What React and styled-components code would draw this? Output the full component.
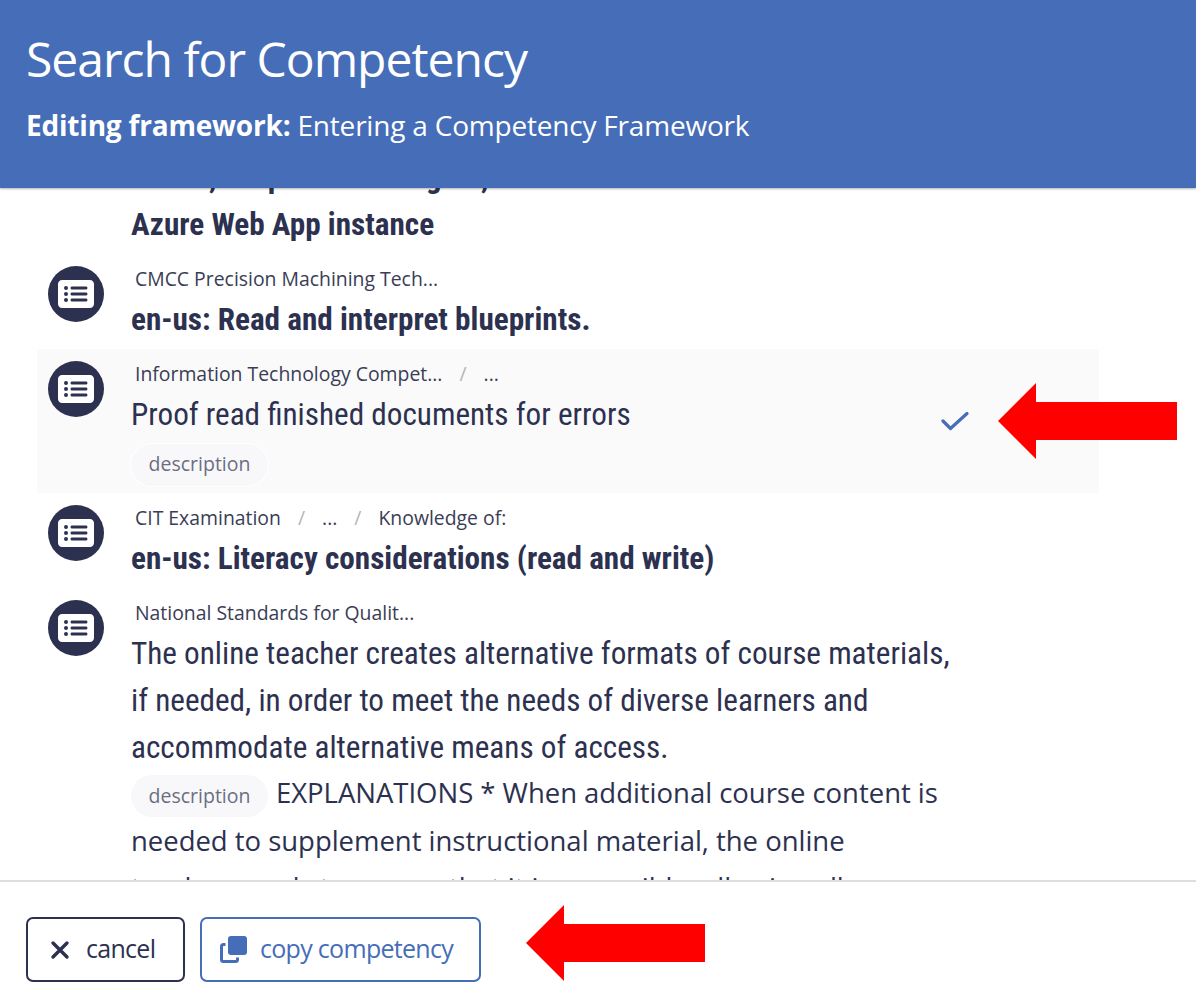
import styled, { createGlobalStyle } from "styled-components";
import { FaRectangleList } from "react-icons/fa6";

const GlobalStyle = createGlobalStyle`
	html, body {
		margin: 0;
		padding: 0;
		background: white;
	}
	body {
		font-family: "Open Sans", "Lato", sans-serif;
	}
`;

const Page = styled.div`
	position: relative;
	height: 1006px;
	display: flex;
	flex-direction: column;
	overflow: hidden;
`;

const Header = styled.header`
	height: 188px;
	flex: none;
	box-sizing: border-box;
	padding: 26px 26px 0;
	background-color: #466db8;
	color: white;
	box-shadow: 0 1px 2px rgba(0, 0, 0, 0.3);
	z-index: 2;
`;

const Title = styled.h1`
	margin: 0;
	font-size: 48px;
	letter-spacing: -1px;
	line-height: 66px;
	font-weight: 400;
`;

const SubTitle = styled.p`
	margin: 13px 0 0;
	font-size: 28px;
	letter-spacing: -0.2px;
	line-height: 40px;
	font-weight: 400;

	b {
		font-weight: 700;
	}
`;

const Results = styled.main`
	flex: 1;
	min-height: 0;
	overflow: hidden;
	padding: 0 97px 0 37px;
`;

const Row = styled.div`
	display: flex;
	padding: 12px 0 6px 11px;
	background-color: ${(props) => (props.$selected ? "#fafafa" : "transparent")};
`;

const FirstRow = styled(Row)`
	margin-top: -34px;
	padding-top: 0;
`;

const Avatar = styled.div`
	flex: none;
	width: 56px;
	height: 56px;
	border-radius: 50%;
	background-color: #2d3150;
	color: white;
	display: flex;
	align-items: center;
	justify-content: center;
	margin-right: 27px;
	font-size: 36px;
`;

const AvatarSpacer = styled.div`
	flex: none;
	width: 83px;
`;

const Content = styled.div`
	width: 825px;
	flex: none;
`;

const Crumbs = styled.div`
	display: flex;
	align-items: center;
	height: 24px;
	margin: 0 0 6px 4px;
	font-size: 19.4px;
	color: #3a3d55;
`;

const Slash = styled.span`
	margin: 0 17px;
	color: #b5b5b5;
`;

const Name = styled.div`
	font-family: "Roboto", sans-serif;
	font-stretch: 75%;
	font-size: 31.2px;
	line-height: 47px;
	font-weight: ${(props) => (props.$bold ? 700 : 400)};
	color: #2d3150;
`;

const Description = styled.div`
	max-width: 810px;
	margin-top: -2px;
	font-size: 27.5px;
	letter-spacing: -0.03px;
	line-height: 47.5px;
	color: #2d3150;
`;

const Chip = styled.span`
	display: inline-flex;
	align-items: center;
	justify-content: center;
	box-sizing: border-box;
	width: 137px;
	height: 42px;
	border-radius: 21px;
	background-color: #f8f8fb;
	box-shadow: 0 0 0 1px white;
	color: #6b6e80;
	font-size: 19.5px;
	letter-spacing: 0;
	vertical-align: middle;
	margin-right: 8px;
`;

const ChipRow = styled.div`
	height: 49px;
	box-sizing: border-box;
	padding-top: 4px;
	display: flex;
	align-items: center;

	${Chip} {
		padding-bottom: 3px;
	}
`;

const CheckCell = styled.div`
	flex: none;
	width: 32px;
	margin-left: -17px;
	display: flex;
	justify-content: center;
	padding-top: 50px;
`;

const Footer = styled.footer`
	height: 126px;
	flex: none;
	box-sizing: border-box;
	background-color: white;
	border-top: 2px solid #dedede;
	padding: 35px 26px 0;
	display: flex;
	gap: 15px;
	z-index: 2;
`;

const Button = styled.button`
	height: 65px;
	box-sizing: border-box;
	width: ${(props) => props.$width}px;
	border-radius: 7px;
	border: 2px solid ${(props) => props.$color};
	background-color: white;
	color: ${(props) => props.$color};
	display: flex;
	align-items: center;
	gap: ${(props) => props.$gap}px;
	padding: 0 0 0 ${(props) => props.$pad}px;
	font-family: inherit;
	font-size: 25px;
	letter-spacing: -0.7px;
	white-space: nowrap;
`;

const ButtonLabel = styled.span`
	margin-top: -3px;
`;

const ArrowShape = styled.svg`
	position: absolute;
	left: ${(props) => props.$left}px;
	top: ${(props) => props.$top}px;
	z-index: 3;
`;

const RedArrow = ({ left, top }) => (
	<ArrowShape $left={left} $top={top} width="179" height="76" viewBox="0 0 179 76">
		<polygon points="0,38 38,0 38,19 179,19 179,57 38,57 38,76" fill="#ff0000" />
	</ArrowShape>
);

const App = () => (
	<Page>
		<GlobalStyle />
		<Header>
			<Title>Search for Competency</Title>
			<SubTitle><b>Editing framework:</b> Entering a Competency Framework</SubTitle>
		</Header>
		<Results>
			<FirstRow>
				<AvatarSpacer />
				<Content>
					<Name $bold>Install, scope and manage it, on an<br />Azure Web App instance</Name>
				</Content>
			</FirstRow>
			<Row>
				<Avatar><FaRectangleList /></Avatar>
				<Content>
					<Crumbs>CMCC Precision Machining Tech...</Crumbs>
					<Name $bold>en-us: Read and interpret blueprints.</Name>
				</Content>
			</Row>
			<Row $selected>
				<Avatar><FaRectangleList /></Avatar>
				<Content>
					<Crumbs>Information Technology Compet...<Slash>/</Slash>...</Crumbs>
					<Name>Proof read finished documents for errors</Name>
					<ChipRow><Chip>description</Chip></ChipRow>
				</Content>
				<CheckCell>
					<svg width="28" height="20" viewBox="0 0 28 20">
						<path d="M2 10 L9.5 17.5 L26 2.5" fill="none" stroke="#466db8" strokeWidth="3.2" strokeLinecap="round" strokeLinejoin="round" />
					</svg>
				</CheckCell>
			</Row>
			<Row>
				<Avatar><FaRectangleList /></Avatar>
				<Content>
					<Crumbs>CIT Examination<Slash>/</Slash>...<Slash>/</Slash>Knowledge of:</Crumbs>
					<Name $bold>en-us: Literacy considerations (read and write)</Name>
				</Content>
			</Row>
			<Row>
				<Avatar><FaRectangleList /></Avatar>
				<Content>
					<Crumbs>National Standards for Qualit...</Crumbs>
					<Name>The online teacher creates alternative formats of course materials, if needed, in order to meet the needs of diverse learners and accommodate alternative means of access.</Name>
					<Description>
						<Chip>description</Chip>EXPLANATIONS * When additional course content is needed to supplement instructional material, the online teacher needs to ensure that it is accessible, allowing all
					</Description>
				</Content>
			</Row>
		</Results>
		<Footer>
			<Button $width={159} $color="#2d3150" $pad={22} $gap={16}>
				<svg width="20" height="20" viewBox="0 0 20 20">
					<path d="M3 3 L17 17 M17 3 L3 17" stroke="#2d3150" strokeWidth="3.4" strokeLinecap="round" />
				</svg>
				<ButtonLabel>cancel</ButtonLabel>
			</Button>
			<Button $width={281} $color="#466db8" $pad={18} $gap={13}>
				<svg width="27" height="27" viewBox="0 0 27 27">
					<rect x="8" y="0" width="19" height="19" rx="3" fill="#466db8" />
					<path d="M5.5 8.5 H3.5 a2 2 0 0 0 -2 2 V23.5 a2 2 0 0 0 2 2 H15.5 a2 2 0 0 0 2 -2 V21.5" fill="none" stroke="#466db8" strokeWidth="3" />
				</svg>
				<ButtonLabel>copy competency</ButtonLabel>
			</Button>
		</Footer>
		<RedArrow left={998} top={383} />
		<RedArrow left={526} top={905} />
	</Page>
);

export default App;
